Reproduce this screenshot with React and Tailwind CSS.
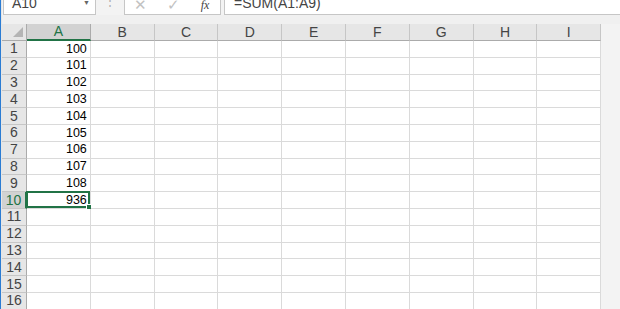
import React from 'react';

const cols = ['A', 'B', 'C', 'D', 'E', 'F', 'G', 'H', 'I'];
const values = [100, 101, 102, 103, 104, 105, 106, 107, 108, 936];
const rows = Array.from({ length: 16 }, (_, i) => i + 1);

function FormulaBar() {
  return (
    <div className="shrink-0 flex h-[15px] bg-[#f3f3f3] overflow-hidden">
      <div className="ml-[1px] w-[93px] h-[15px] bg-white border border-t-0 border-[#c6c6c6] flex justify-between items-start pl-[8px] pr-[5px]">
        <span className="-mt-[7px] text-[14px] text-[#444]">A10</span>
        <span className="-mt-[2px] text-[7px] text-[#666]">▼</span>
      </div>
      <div className="w-[28px] flex justify-center">
        <span className="-mt-[5px] text-[12px] leading-none text-[#b0b0b0]">⋮</span>
      </div>
      <div className="w-[97px] h-[15px] bg-white border border-t-0 border-[#c6c6c6] flex items-start">
        <span className="w-[30px] text-center -mt-[6px] text-[15px] text-[#c2c2c2]">✕</span>
        <span className="w-[36px] text-center -mt-[6px] text-[15px] text-[#c2c2c2]">✓</span>
        <span className="w-[28px] text-center -mt-[4px] text-[12px] italic text-[#444] font-['Liberation_Serif',serif]">fx</span>
      </div>
      <div className="ml-[3px] flex-1 h-[15px] bg-white border border-t-0 border-r-0 border-[#c6c6c6] pl-[9px]">
        <span className="block -mt-[7px] text-[14px] text-[#444]">=SUM(A1:A9)</span>
      </div>
    </div>
  );
}

function Sheet() {
  return (
    <div className="shrink-0 grid grid-cols-[25px_repeat(9,63.8px)] grid-rows-[17px_repeat(16,16.8px)]">
      <div className="relative bg-[#e6e6e6] border-r border-b border-[#ababab]">
        <div className="absolute right-[3px] bottom-[3px] w-0 h-0 border-l-[10px] border-l-transparent border-b-[10px] border-b-[#b4b4b4]" />
      </div>
      {cols.map((c) => (
        <div
          key={c}
          className={
            c === 'A'
              ? 'flex items-center justify-center bg-[#d2d2d2] border-r border-[#ababab] border-b-2 border-b-[#217346] text-[14px] text-[#217346]'
              : 'flex items-center justify-center bg-[#e6e6e6] border-r border-b border-[#c6c6c6] border-b-[#ababab] text-[14px] text-[#444]'
          }
        >
          {c}
        </div>
      ))}
      {rows.map((r) => (
        <React.Fragment key={r}>
          <div
            className={
              r === 10
                ? 'flex items-center justify-center bg-[#d2d2d2] border-r-2 border-r-[#217346] border-b border-b-[#c6c6c6] text-[14px] text-[#217346]'
                : 'flex items-center justify-center bg-[#e6e6e6] border-r border-b border-[#c6c6c6] border-r-[#ababab] text-[14px] text-[#444]'
            }
          >
            {r}
          </div>
          {cols.map((c) => (
            <div
              key={c}
              className="relative flex items-center justify-end pr-[3px] bg-white border-r border-b border-[#dadada] text-[12.5px] text-black"
            >
              {c === 'A' && r <= 10 ? values[r - 1] : ''}
              {c === 'A' && r === 10 && (
                <div className="absolute -left-[1px] -top-[1px] right-0 bottom-0 border-2 border-[#217346]">
                  <div className="absolute -right-[4px] -bottom-[4px] w-[6px] h-[6px] bg-[#217346] border border-white" />
                </div>
              )}
            </div>
          ))}
        </React.Fragment>
      ))}
    </div>
  );
}

export default function App() {
  return (
    <div className="w-[620px] h-[309px] overflow-hidden flex bg-[#f3f3f3] font-['Liberation_Sans',Arial,sans-serif]">
      <div className="w-[1px] bg-[#2b7cd3]" />
      <div className="w-[1px] bg-[#e6e6e6]" />
      <div className="flex-1 flex flex-col">
        <FormulaBar />
        <div className="shrink-0 h-[9px] bg-[#f0f0f0]" />
        <Sheet />
      </div>
    </div>
  );
}
